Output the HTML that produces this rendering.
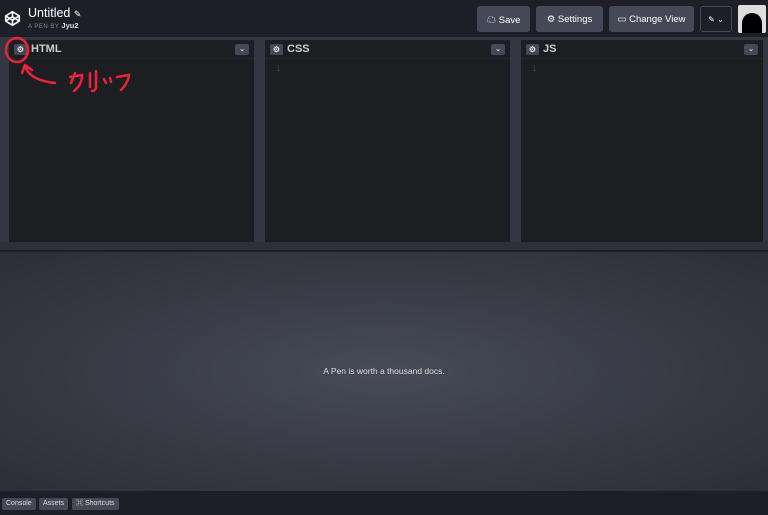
<!DOCTYPE html>
<html><head><meta charset="utf-8"><style>
*{margin:0;padding:0;box-sizing:border-box}
body{width:768px;height:515px;overflow:hidden;background:#2c303a;font-family:"Liberation Sans","Noto Sans CJK JP",sans-serif;position:relative;color:#fff}
.hdr{position:absolute;left:0;top:0;width:768px;height:37px;background:#1e1f26}
.btn{position:absolute;top:6px;height:26px;background:#444857;border-radius:3px;font-size:9.5px;color:#fff;display:flex;align-items:center;justify-content:center;gap:5px}
.cols{position:absolute;left:0;top:37px;width:768px;height:205px;background:#343641}
.pan{position:absolute;top:3px;height:202px;background:#1d1e22}
.ph{height:19px;background:#1d1e22;border-bottom:1px solid #25262b;position:relative;font-size:11px;font-weight:bold;color:#ccc}
.gear{position:absolute;left:5px;top:4px;width:13px;height:11px;background:#444857;border-radius:2px;font-size:8px;color:#ddd;text-align:center;line-height:11px}
.dd{position:absolute;right:5px;top:4px;width:14px;height:11px;background:#444857;border-radius:2px;font-size:7px;color:#ddd;text-align:center;line-height:11px}
.ln{position:absolute;left:11px;top:24px;font-size:8px;color:#3b3d45}
.prev{position:absolute;left:0;top:252px;width:768px;height:239px;background:radial-gradient(ellipse at 50% 50%,#474b58 0%,#363944 60%,#2c2f39 100%)}
.ft{position:absolute;left:0;top:491px;width:768px;height:24px;background:#1e1f26}
.fb{position:absolute;top:7px;height:12px;background:#444857;border-radius:2px;font-size:7px;color:#ddd;padding:0 4px;line-height:12px}
</style></head><body>
<div class="hdr">
<svg style="position:absolute;left:4px;top:10px" width="17" height="17" viewBox="0 0 20 20" fill="none" stroke="#fff" stroke-width="1.8" stroke-linejoin="round"><path d="M10 2L18 7V13L10 18L2 13V7Z M2 7L10 12L18 7 M2 13L10 8L18 13 M10 2V8 M10 12V18"/></svg>
<div style="position:absolute;left:28px;top:6px;font-size:12.5px;color:#fff">Untitled <span style="font-size:9px">✎</span></div>
<div style="position:absolute;left:28px;top:21px;font-size:6px;color:#888;letter-spacing:.5px">A PEN BY <span style="color:#ddd;font-size:7.5px;font-weight:bold;letter-spacing:0">Jyu2</span></div>
<div class="btn" style="left:477px;width:53px">☁ Save</div>
<div class="btn" style="left:536px;width:67px">⚙ Settings</div>
<div class="btn" style="left:609px;width:85px">▭ Change View</div>
<div class="btn" style="left:700px;width:32px;background:#1e1f26;border:1px solid #444857;font-size:8px">✎ ⌄</div>
<div style="position:absolute;left:738px;top:5px;width:28px;height:28px;background:#ddd;border-radius:2px;overflow:hidden"><div style="position:absolute;left:4px;top:8px;width:20px;height:22px;background:#000;border-radius:10px 10px 0 0"></div></div>
</div>
<div class="cols">
<div class="pan" style="left:9px;width:245px"><div class="ph"><div class="gear">⚙</div><span style="position:absolute;left:22px;top:3px">HTML</span><div class="dd">⌄</div></div></div>
<div class="pan" style="left:265px;width:245px"><div class="ph"><div class="gear">⚙</div><span style="position:absolute;left:22px;top:3px">CSS</span><div class="dd">⌄</div></div><div class="ln">1</div></div>
<div class="pan" style="left:521px;width:242px"><div class="ph"><div class="gear">⚙</div><span style="position:absolute;left:22px;top:3px">JS</span><div class="dd">⌄</div></div><div class="ln">1</div></div>
</div>
<div style="position:absolute;left:0;top:250px;width:768px;height:2px;background:#1e1f26"></div>
<div class="prev"><div style="position:absolute;top:114px;width:768px;text-align:center;font-size:8.5px;color:#ddd">A Pen is worth a thousand docs.</div></div>
<div class="ft"><div class="fb" style="left:2px">Console</div><div class="fb" style="left:39px">Assets</div><div class="fb" style="left:72px">⌘ Shortcuts</div></div>
<svg style="position:absolute;left:0;top:35px" width="140" height="60" viewBox="0 0 140 60" fill="none" stroke="#e8233a" stroke-width="2.5" stroke-linecap="round">
<ellipse cx="17" cy="15" rx="11" ry="12"/>
<path d="M25 30 Q28 45 55 48 M25 30 L22 38 M25 30 L32 35"/>
<path d="M70 42 L82 40 Q82 50 74 56 M75 38 L71 48 M90 38 L90 52 M96 36 L96 53 Q95 56 92 56 M104 44 L106 48 M110 43 L111 47 M117 42 L129 40 Q128 48 121 55"/>
</svg>
</body></html>
